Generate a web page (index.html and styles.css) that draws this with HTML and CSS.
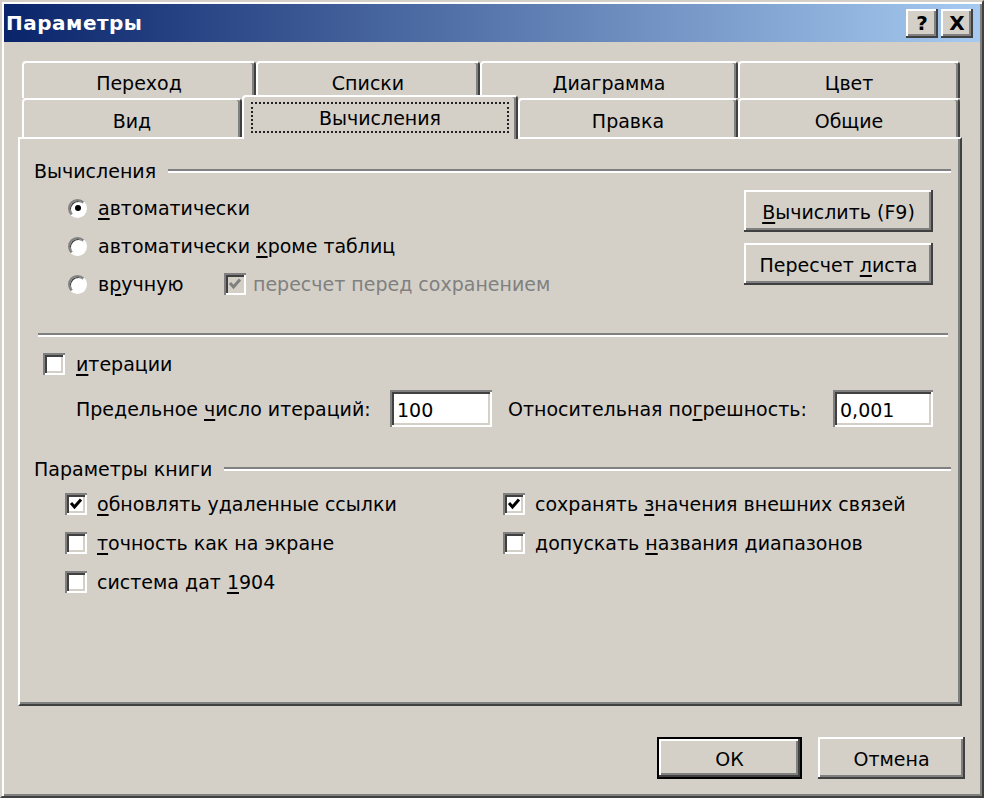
FILE: index.html
```html
<!DOCTYPE html>
<html lang="ru">
<head>
    <meta charset="UTF-8">
    <title>Параметры</title>
    <link rel="stylesheet" href="styles.css">
</head>
<body>
    <div class="window">
        <div class="titlebar">
            <span class="title">Параметры</span>
            <div class="caption-buttons">
                <div class="caption-btn">?</div>
                <div class="caption-btn">X</div>
            </div>
        </div>

        <div class="tabs">
            <div class="tab-row back">
                <div class="tab tab-go">Переход</div>
                <div class="tab tab-lists">Списки</div>
                <div class="tab tab-chart">Диаграмма</div>
                <div class="tab tab-color">Цвет</div>
            </div>
            <div class="tab-row front">
                <div class="tab tab-view">Вид</div>
                <div class="tab tab-calc selected"><span class="focus">Вычисления</span></div>
                <div class="tab tab-edit">Правка</div>
                <div class="tab tab-general">Общие</div>
            </div>
        </div>

        <div class="panel">
            <div class="group-title"><span>Вычисления</span><div class="etch"></div></div>

            <div class="calc">
                <div class="calc-options">
                    <div class="option">
                        <span class="radio checked"></span>
                        <span><u>а</u>втоматически</span>
                    </div>
                    <div class="option">
                        <span class="radio"></span>
                        <span>автоматически <u>к</u>роме таблиц</span>
                    </div>
                    <div class="option">
                        <span class="radio"></span>
                        <span class="manual-label">в<u>р</u>учную</span>
                        <span class="check disabled">
                            <svg viewBox="0 0 22 22" width="22" height="22"><path d="M6 10 L9.5 14 L16 6.5" fill="none" stroke="#808080" stroke-width="3"/></svg>
                        </span>
                        <span class="muted">пересчет перед сохранением</span>
                    </div>
                </div>
                <div class="calc-buttons">
                    <div class="button"><span><u>В</u>ычислить (F9)</span></div>
                    <div class="button"><span>Пересчет <u>л</u>иста</span></div>
                </div>
            </div>

            <div class="etch separator"></div>

            <div class="iter-toggle">
                <span class="check"></span>
                <span><u>и</u>терации</span>
            </div>

            <div class="iter-limits">
                <span class="limit-label">Предельное <u>ч</u>исло итераций:</span>
                <div class="field field-count">100</div>
                <span class="limit-label error-label">Относительная по<u>г</u>решность:</span>
                <div class="field field-error">0,001</div>
            </div>

            <div class="group-title book-title"><span>Параметры книги</span><div class="etch"></div></div>

            <div class="book-options">
                <div class="book-col left">
                    <div class="option">
                        <span class="check">
                            <svg viewBox="0 0 22 22" width="22" height="22"><path d="M6 10 L9.5 14 L16 6.5" fill="none" stroke="#000" stroke-width="3"/></svg>
                        </span>
                        <span><u>о</u>бновлять удаленные ссылки</span>
                    </div>
                    <div class="option">
                        <span class="check"></span>
                        <span><u>т</u>очность как на экране</span>
                    </div>
                    <div class="option">
                        <span class="check"></span>
                        <span>система дат <u>1</u>904</span>
                    </div>
                </div>
                <div class="book-col">
                    <div class="option">
                        <span class="check">
                            <svg viewBox="0 0 22 22" width="22" height="22"><path d="M6 10 L9.5 14 L16 6.5" fill="none" stroke="#000" stroke-width="3"/></svg>
                        </span>
                        <span>сохранять <u>з</u>начения внешних связей</span>
                    </div>
                    <div class="option">
                        <span class="check"></span>
                        <span>допускать <u>н</u>азвания диапазонов</span>
                    </div>
                </div>
            </div>
        </div>

        <div class="footer">
            <div class="button default btn-ok">ОК</div>
            <div class="button btn-cancel">Отмена</div>
        </div>
    </div>
</body>
</html>
```

FILE: styles.css
```css
body {
    margin: 0;
    font-family: 'DejaVu Sans', 'Liberation Sans', sans-serif;
    font-size: 19px;
    color: #000;
    background: #d4d0c8;
}

u {
    text-underline-offset: 3px;
    text-decoration-thickness: 2px;
}

.window {
    width: 984px;
    height: 798px;
    box-sizing: border-box;
    background: #d4d0c8;
    border: 2px solid;
    border-color: #d4d0c8 #404040 #404040 #d4d0c8;
    box-shadow: inset 2px 2px #fff, inset -2px -2px #808080;
    padding: 2px;
    display: flex;
    flex-direction: column;
}

/* title bar */

.titlebar {
    height: 38px;
    flex-shrink: 0;
    display: flex;
    align-items: center;
    justify-content: space-between;
    padding: 0 7px 0 2px;
    background: linear-gradient(to right, #0a246a, #a6caf0);
}

.title {
    color: #fff;
    font-weight: bold;
    font-size: 20px;
    letter-spacing: 0.5px;
}

.caption-buttons {
    display: flex;
    gap: 3px;
}

.caption-btn {
    width: 32px;
    height: 29px;
    display: flex;
    align-items: center;
    justify-content: center;
    font-weight: bold;
    font-size: 20px;
    background: #d4d0c8;
    box-shadow: inset -2px -2px #404040, inset 2px 2px #fff, inset -4px -4px #808080;
}

/* tabs */

.tabs {
    margin: 19px 0 0 18px;
    width: 938px;
}

.tab-row {
    display: flex;
}

.tab-row.back {
    height: 37px;
}

.tab-row.front {
    height: 39px;
}

.tab {
    box-sizing: border-box;
    height: 100%;
    display: flex;
    align-items: center;
    justify-content: center;
    padding-top: 4px;
    background: #d4d0c8;
    border: 2px solid;
    border-bottom: none;
    border-color: #fff #404040 transparent #fff;
    border-radius: 4px 4px 0 0;
    box-shadow: inset -2px 0 #808080;
}

.tab-go { width: 234px; }
.tab-lists { width: 224px; }
.tab-chart { width: 258px; }
.tab-color { width: 222px; }
.tab-view { width: 220px; }
.tab-calc { width: 276px; }
.tab-edit { width: 220px; }
.tab-general { width: 222px; }

.tab.selected {
    position: relative;
    z-index: 1;
    height: 44px;
    margin-top: -3px;
    align-items: flex-start;
    padding-top: 5px;
}

.focus {
    width: 258px;
    height: 31px;
    box-sizing: border-box;
    display: flex;
    align-items: center;
    justify-content: center;
    border: 2px dotted #222;
}

/* tab page */

.panel {
    margin-left: 14px;
    width: 944px;
    height: 569px;
    flex-shrink: 0;
    box-sizing: border-box;
    padding: 20px 9px 0 14px;
    border: 2px solid;
    border-color: #fff #404040 #404040 #fff;
    box-shadow: inset -2px -2px #808080;
}

.group-title {
    height: 24px;
    display: flex;
    align-items: center;
    gap: 12px;
}

.etch {
    flex: 1;
    border-top: 2px solid #808080;
    border-bottom: 2px solid #fff;
}

.calc {
    display: flex;
    justify-content: space-between;
}

.calc-options {
    margin: 6px 0 0 34px;
    display: flex;
    flex-direction: column;
}

.option {
    height: 38px;
    display: flex;
    align-items: center;
    gap: 11px;
}

.manual-label {
    width: 115px;
}

.muted {
    color: #808080;
    margin-left: -4px;
}

.calc-buttons {
    margin: 7px 18px 0 0;
    display: flex;
    flex-direction: column;
    gap: 11px;
}

.calc-buttons .button {
    width: 189px;
    height: 42px;
}

.button {
    box-sizing: border-box;
    display: flex;
    align-items: center;
    justify-content: center;
    padding-top: 2px;
    background: #d4d0c8;
    box-shadow: inset -2px -2px #404040, inset 2px 2px #fff, inset -4px -4px #808080;
}

.button.default {
    border: 2px solid #000;
}

.separator {
    flex: none;
    margin: 30px 3px 0 4px;
}

.radio {
    width: 19px;
    height: 19px;
    flex-shrink: 0;
    box-sizing: border-box;
    display: flex;
    align-items: center;
    justify-content: center;
    border-radius: 50%;
    background: #fff;
    border: 2px solid;
    border-color: #808080 #fff #fff #808080;
    box-shadow: inset 1px 1px #404040;
}

.radio.checked::after {
    content: "";
    width: 6px;
    height: 6px;
    border-radius: 50%;
    background: #000;
}

.check {
    width: 22px;
    height: 22px;
    flex-shrink: 0;
    box-sizing: border-box;
    display: block;
    background: #fff;
    box-shadow: inset 2px 2px #808080, inset -2px -2px #fff, inset 4px 4px #404040, inset -4px -4px #d4d0c8;
}

.check svg {
    display: block;
}

.check.disabled {
    background: #d4d0c8;
}

.iter-toggle {
    margin: 15px 0 0 9px;
    height: 24px;
    display: flex;
    align-items: center;
    gap: 11px;
}

.iter-limits {
    margin: 14px 0 0 42px;
    height: 37px;
    display: flex;
    align-items: center;
}

.limit-label {
    width: 314px;
}

.limit-label.error-label {
    width: 325px;
    margin-left: 16px;
}

.field {
    box-sizing: border-box;
    height: 37px;
    display: flex;
    align-items: center;
    padding: 2px 0 0 7px;
    background: #fff;
    box-shadow: inset 2px 2px #808080, inset -2px -2px #fff, inset 4px 4px #404040, inset -4px -4px #d4d0c8;
}

.field-count { width: 102px; }
.field-error { width: 100px; }

.book-title {
    margin-top: 30px;
}

.book-options {
    margin: 3px 0 0 31px;
    display: flex;
}

.book-col {
    display: flex;
    flex-direction: column;
}

.book-col.left {
    width: 438px;
}

.book-col .option {
    height: 39px;
    gap: 10px;
}

/* dialog buttons */

.footer {
    margin-top: 31px;
    padding-right: 15px;
    display: flex;
    justify-content: flex-end;
    gap: 16px;
}

.btn-ok {
    width: 145px;
    height: 42px;
}

.btn-cancel {
    width: 147px;
    height: 42px;
}
```
